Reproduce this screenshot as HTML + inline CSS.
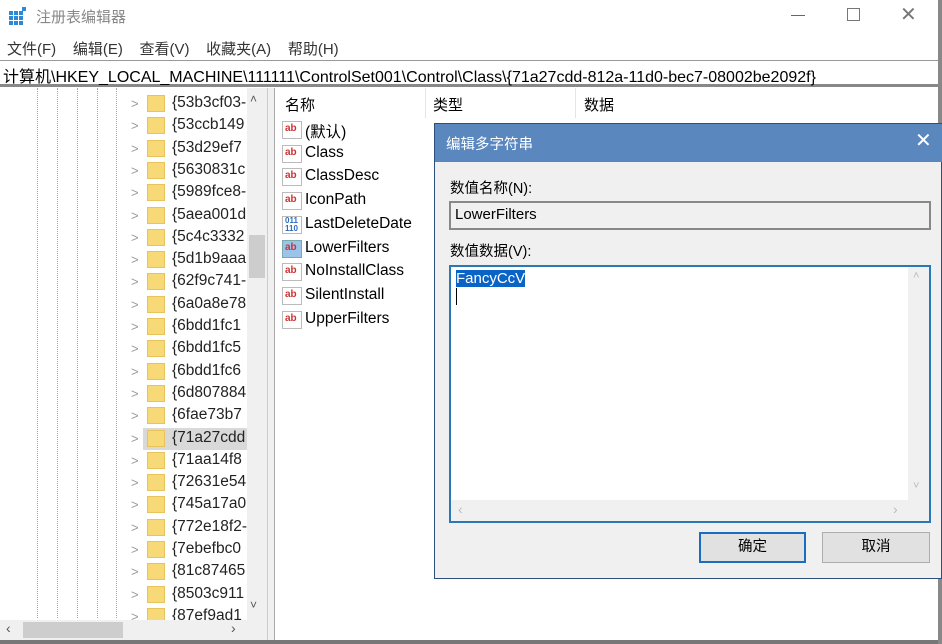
<!DOCTYPE html>
<html><head><meta charset="utf-8"><style>
*{margin:0;padding:0;box-sizing:border-box}
body{width:942px;height:644px;overflow:hidden;background:#fff;font-family:"Liberation Sans","Noto Sans CJK SC",sans-serif;font-size:14px;color:#000;position:relative}
.a{position:absolute;white-space:nowrap}
.row{position:absolute;left:0;height:22px;white-space:nowrap}
.chev{position:absolute;left:131px;top:3px;color:#999;font-size:13px}
.fold{position:absolute;left:147px;top:2px;width:18px;height:17px;background:#f7d978;border:1px solid #e8c35a}
.tt{position:absolute;left:172px;top:1px;font-size:15.5px;color:#222}
.vi{position:absolute;left:282px;height:22px;white-space:nowrap}
.ab{position:absolute;left:0;top:1px;width:20px;height:18px;border:1px solid #bbb;background:#fff;color:#c33;font-size:10px;font-weight:bold;line-height:14px;padding-left:2px}
.vt{position:absolute;left:23px;top:0;font-size:15.5px}
.dl{position:absolute;left:0;width:1px;height:530px;border-left:1px dotted #aaa}
</style></head><body>
<div class="a" style="left:9px;top:7px;width:18px;height:18px">
<svg width="18" height="18"><g fill="#2a8ad8"><rect x="0" y="4" width="4" height="4"/><rect x="5" y="4" width="4" height="4"/><rect x="10" y="4" width="4" height="4"/><rect x="0" y="9" width="4" height="4"/><rect x="5" y="9" width="4" height="4"/><rect x="10" y="9" width="4" height="4"/><rect x="0" y="14" width="4" height="4"/><rect x="5" y="14" width="4" height="4"/><rect x="10" y="14" width="4" height="4"/><rect x="13" y="0" width="4" height="4"/></g></svg></div>
<div class="a" style="left:36px;top:6px;font-size:15px;color:#888">注册表编辑器</div>
<div class="a" style="left:791px;top:15px;width:14px;height:1px;background:#666"></div>
<div class="a" style="left:847px;top:8px;width:13px;height:13px;border:1px solid #777"></div>
<div class="a" style="left:900px;top:2px;font-size:20px;color:#777">✕</div>
<div class="a" style="left:7px;top:38px;font-size:15px;color:#333">文件(F)&nbsp;&nbsp;&nbsp;&nbsp;编辑(E)&nbsp;&nbsp;&nbsp;&nbsp;查看(V)&nbsp;&nbsp;&nbsp;&nbsp;收藏夹(A)&nbsp;&nbsp;&nbsp;&nbsp;帮助(H)</div>
<div class="a" style="left:0;top:60px;width:940px;height:27px;border-top:1px solid #999;border-bottom:3px solid #888"></div>
<div class="a" style="left:3px;top:63px;font-size:16px">计算机\HKEY_LOCAL_MACHINE\111111\ControlSet001\Control\Class\{71a27cdd-812a-11d0-bec7-08002be2092f}</div>
<div class="a" style="left:0;top:88px;width:247px;height:532px;overflow:hidden">
<div class="dl" style="left:37px;top:0"></div><div class="dl" style="left:57px;top:0"></div><div class="dl" style="left:77px;top:0"></div><div class="dl" style="left:97px;top:0"></div><div class="dl" style="left:116px;top:0"></div>
<div class="a" style="left:143px;top:340px;width:104px;height:22px;background:#d9d9d9"></div>
<div id="tree" class="a" style="left:0;top:0;width:247px;height:532px"></div>
</div>
<div class="a" style="left:247px;top:88px;width:20px;height:532px;background:#f0f0f0"></div>
<div class="a" style="left:249px;top:235px;width:16px;height:43px;background:#cdcdcd"></div>
<div class="a" style="left:250px;top:92px;color:#555;font-size:12px">&#x2C4;</div>
<div class="a" style="left:250px;top:598px;color:#555;font-size:12px">&#x2C5;</div>
<div class="a" style="left:0;top:620px;width:267px;height:20px;background:#f0f0f0"></div>
<div class="a" style="left:23px;top:622px;width:100px;height:16px;background:#cdcdcd"></div>
<div class="a" style="left:6px;top:620px;color:#555">‹</div>
<div class="a" style="left:231px;top:620px;color:#555">›</div>
<div class="a" style="left:267px;top:88px;width:8px;height:556px;background:#f0f0f0;border-left:1px solid #ccc;border-right:1px solid #aaa"></div>
<div class="a" style="left:0;top:640px;width:942px;height:4px;background:#777"></div>
<div class="a" style="left:938px;top:0;width:4px;height:644px;background:#888"></div>
<div class="a" style="left:285px;top:94px;font-size:15px">名称</div>
<div class="a" style="left:425px;top:88px;width:1px;height:30px;background:#e5e5e5"></div>
<div class="a" style="left:433px;top:94px;font-size:15px">类型</div>
<div class="a" style="left:575px;top:88px;width:1px;height:30px;background:#e5e5e5"></div>
<div class="a" style="left:584px;top:94px;font-size:15px">数据</div>
<div id="vals"></div>
<div class="a" style="left:434px;top:123px;width:508px;height:456px;background:#f0f0f0;border:1px solid #2b4e7e"></div>
<div class="a" style="left:435px;top:124px;width:507px;height:38px;background:#5b87bf"></div>
<div class="a" style="left:446px;top:133px;font-size:14.5px;color:#fff">编辑多字符串</div>
<div class="a" style="left:915px;top:128px;font-size:20px;color:#fff">✕</div>
<div class="a" style="left:450px;top:177px;font-size:14.5px">数值名称(N):</div>
<div class="a" style="left:449px;top:201px;width:482px;height:29px;border:2px solid #888;background:#f0f0f0"></div>
<div class="a" style="left:455px;top:206px;font-size:15px">LowerFilters</div>
<div class="a" style="left:450px;top:240px;font-size:14.5px">数值数据(V):</div>
<div class="a" style="left:449px;top:265px;width:482px;height:258px;border:2px solid #2a78b8;background:#fff"></div>
<div class="a" style="left:908px;top:267px;width:21px;height:234px;background:#f0f0f0"></div>
<div class="a" style="left:451px;top:500px;width:478px;height:21px;background:#f0f0f0"></div>
<div class="a" style="left:456px;top:270px;font-size:15px;color:#fff;background:#0a64c8;line-height:17px">FancyCcV</div>
<div class="a" style="left:456px;top:288px;width:1px;height:17px;background:#000"></div>
<div class="a" style="left:913px;top:270px;color:#bbb;font-size:11px">&#x2C4;</div>
<div class="a" style="left:913px;top:480px;color:#bbb;font-size:11px">&#x2C5;</div>
<div class="a" style="left:458px;top:501px;color:#bbb">‹</div>
<div class="a" style="left:893px;top:501px;color:#bbb">›</div>
<div class="a" style="left:699px;top:532px;width:107px;height:31px;border:2px solid #1a6dc0;background:#e1e1e1;text-align:center;line-height:27px;font-size:14.5px">确定</div>
<div class="a" style="left:822px;top:532px;width:108px;height:31px;border:1px solid #adadad;background:#e1e1e1;text-align:center;line-height:29px;font-size:14.5px">取消</div>
<script>
var t=["53b3cf03-","53ccb149","53d29ef7","5630831c","5989fce8-","5aea001d","5c4c3332","5d1b9aaa","62f9c741-","6a0a8e78","6bdd1fc1","6bdd1fc5","6bdd1fc6","6d807884","6fae73b7","71a27cdd","71aa14f8","72631e54","745a17a0","772e18f2-","7ebefbc0","81c87465","8503c911","87ef9ad1"];
var h="";t.forEach(function(s,i){h+='<div class="row" style="top:'+(5+i*22.3)+'px;width:247px;overflow:hidden"><span class="chev">&gt;</span><span class="fold"></span><span class="tt">{'+s+'</span></div>'});
document.getElementById("tree").innerHTML=h;
var v=["(默认)","Class","ClassDesc","IconPath","LastDeleteDate","LowerFilters","NoInstallClass","SilentInstall","UpperFilters"];h="";
v.forEach(function(s,i){var ic=i==4?'<span class="ab" style="color:#2a6bc0;font-size:8px;line-height:8px">011<br>110</span>':(i==5?'<span class="ab" style="background:#9cc3ea;border-color:#7aa">ab</span>':'<span class="ab">ab</span>');h+='<div class="vi" style="top:'+(120+i*23.7)+'px">'+ic+'<span class="vt">'+s+'</span></div>'});
document.getElementById("vals").innerHTML=h;
</script>
</body></html>
